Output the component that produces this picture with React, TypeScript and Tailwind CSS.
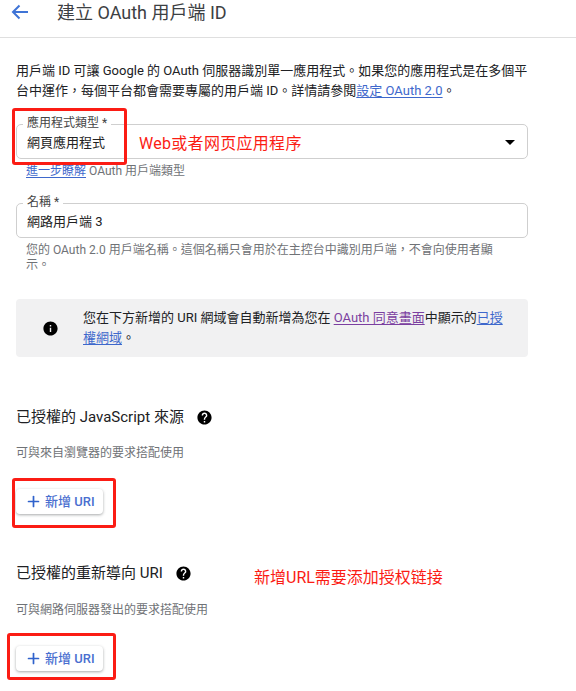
import { Plus } from 'lucide-react';

const font = { fontFamily: '"Roboto", "Noto Sans CJK TC", sans-serif' };

function InfoIcon({ mark }: { mark: 'i' | '?' }) {
  return (
    <svg width="17" height="17" viewBox="0 0 24 24" fill="#000" className="shrink-0">
      {mark === 'i' ? (
        <path d="M12 2C6.48 2 2 6.48 2 12s4.48 10 10 10 10-4.48 10-10S17.52 2 12 2zm1 15h-2v-6h2v6zm0-8h-2V7h2v2z" />
      ) : (
        <path d="M12 2C6.48 2 2 6.48 2 12s4.48 10 10 10 10-4.48 10-10S17.52 2 12 2zm1 17h-2v-2h2v2zm2.07-7.75l-.9.92C13.45 12.9 13 13.5 13 15h-2v-.5c0-1.1.45-2.1 1.17-2.83l1.24-1.26c.37-.36.59-.86.59-1.41 0-1.1-.9-2-2-2s-2 .9-2 2H8c0-2.21 1.79-4 4-4s4 1.79 4 4c0 .88-.36 1.68-.93 2.25z" />
      )}
    </svg>
  );
}

function AddUri() {
  return (
    <button className="flex items-center h-[25px] w-[87px] pl-[9px] bg-white rounded-[4px] shadow-[0_1px_3px_rgba(60,64,67,0.45)] text-[#4a6fd0] text-[13px] font-medium">
      <Plus size={17} strokeWidth={2.4} className="text-[#2f62cc] mr-[3px]" />
      <span>新增 URI</span>
    </button>
  );
}

function Field({ label, value, children }: { label: string; value: string; children?: React.ReactNode }) {
  return (
    <div className="relative h-[35px] border border-[#cfcfcf] rounded-[5px] flex items-center justify-between pl-[10px] pr-[12px] pt-[2px]">
      <span className="absolute left-[6px] top-[-9px] bg-white px-[4px] text-[12px] leading-[14px] text-[#444]">{label}</span>
      <span className="text-[13px] text-[#222]">{value}</span>
      {children}
    </div>
  );
}

export default function App() {
  return (
    <div style={font} className="relative w-[576px] h-[691px] overflow-hidden bg-white text-[#202124]">
      <header className="flex items-center h-[38px] pb-[13px] pl-[11px] border-b border-[#dfdfdf]">
        <svg width="18" height="16" viewBox="0 0 18 16" fill="none" stroke="#3f74d6" strokeWidth="2" className="mr-[28px]">
          <path d="M17 8H2M8.5 1.5L2 8l6.5 6.5" />
        </svg>
        <h1 className="text-[18px] text-[#3c4043]">建立 OAuth 用戶端 ID</h1>
      </header>

      <main className="pl-[16px] w-[528px]">
        <p className="pt-[23px] text-[13px] leading-[20px] text-[#202124]">
          用戶端 ID 可讓 Google 的 OAuth 伺服器識別單一應用程式。如果您的應用程式是在多個平台中運作，每個平台都會需要專屬的用戶端 ID。詳情請參閱
          <span className="text-[#3e68cc] underline underline-offset-2">設定 OAuth 2.0</span>。
        </p>

        <div className="mt-[23px]">
          <Field label="應用程式類型 *" value="網頁應用程式">
            <span className="w-0 h-0 border-x-[5px] border-x-transparent border-t-[5px] border-t-black" />
          </Field>
          <p className="pl-[10px] mt-[4px] text-[12px] leading-[16px] text-[#6f7276]">
            <span className="text-[#3e68cc] underline underline-offset-2">進一步瞭解</span> OAuth 用戶端類型
          </p>
        </div>

        <div className="mt-[24px]">
          <Field label="名稱 *" value="網路用戶端 3" />
          <p className="pl-[10px] pr-[32px] mt-[5px] text-[12px] leading-[15px] text-[#6f7276]">
            您的 OAuth 2.0 用戶端名稱。這個名稱只會用於在主控台中識別用戶端，不會向使用者顯示。
          </p>
        </div>

        <div className="mt-[26px] h-[58px] flex items-center bg-[#f1f1f2] rounded-[4px] pl-[26px] pr-[20px]">
          <InfoIcon mark="i" />
          <p className="ml-[24px] text-[13px] leading-[20px] text-[#202124]">
            您在下方新增的 URI 網域會自動新增為您在 <span className="text-[#7b3fa0] underline underline-offset-2">OAuth 同意畫面</span>中顯示的<span className="text-[#3e68cc] underline underline-offset-2">已授權網域</span>。
          </p>
        </div>

        <section className="mt-[50px]">
          <div className="flex items-center h-[20px]">
            <h2 className="text-[15px]">已授權的 JavaScript 來源</h2>
            <span className="ml-[12px]"><InfoIcon mark="?" /></span>
          </div>
          <p className="mt-[18px] text-[12px] leading-[16px] text-[#6f7276]">可與來自瀏覽器的要求搭配使用</p>
          <div className="mt-[28px]"><AddUri /></div>
        </section>

        <section className="mt-[49px]">
          <div className="flex items-center h-[20px]">
            <h2 className="text-[15px]">已授權的重新導向 URI</h2>
            <span className="ml-[12px]"><InfoIcon mark="?" /></span>
          </div>
          <p className="mt-[19px] text-[12px] leading-[16px] text-[#6f7276]">可與網路伺服器發出的要求搭配使用</p>
          <div className="mt-[28px]"><AddUri /></div>
        </section>
      </main>

      {/* red annotations on top of the screenshot */}
      <div className="absolute left-[12px] top-[108px] w-[115px] h-[57px] border-[3px] border-[#fb1c14] rounded-[3px]" />
      <div className="absolute left-[12px] top-[478px] w-[104px] h-[50px] border-[3px] border-[#fb1c14] rounded-[3px]" />
      <div className="absolute left-[7px] top-[633px] w-[109px] h-[47px] border-[3px] border-[#fb1c14] rounded-[3px]" />
      <span className="absolute left-[139px] top-[133px] text-[16px] leading-[22px] tracking-[0.3px] text-[#fb1c14]">Web或者网页应用程序</span>
      <span className="absolute left-[254px] top-[567px] text-[16px] leading-[22px] text-[#fb1c14]">新增URL需要添加授权链接</span>
    </div>
  );
}
